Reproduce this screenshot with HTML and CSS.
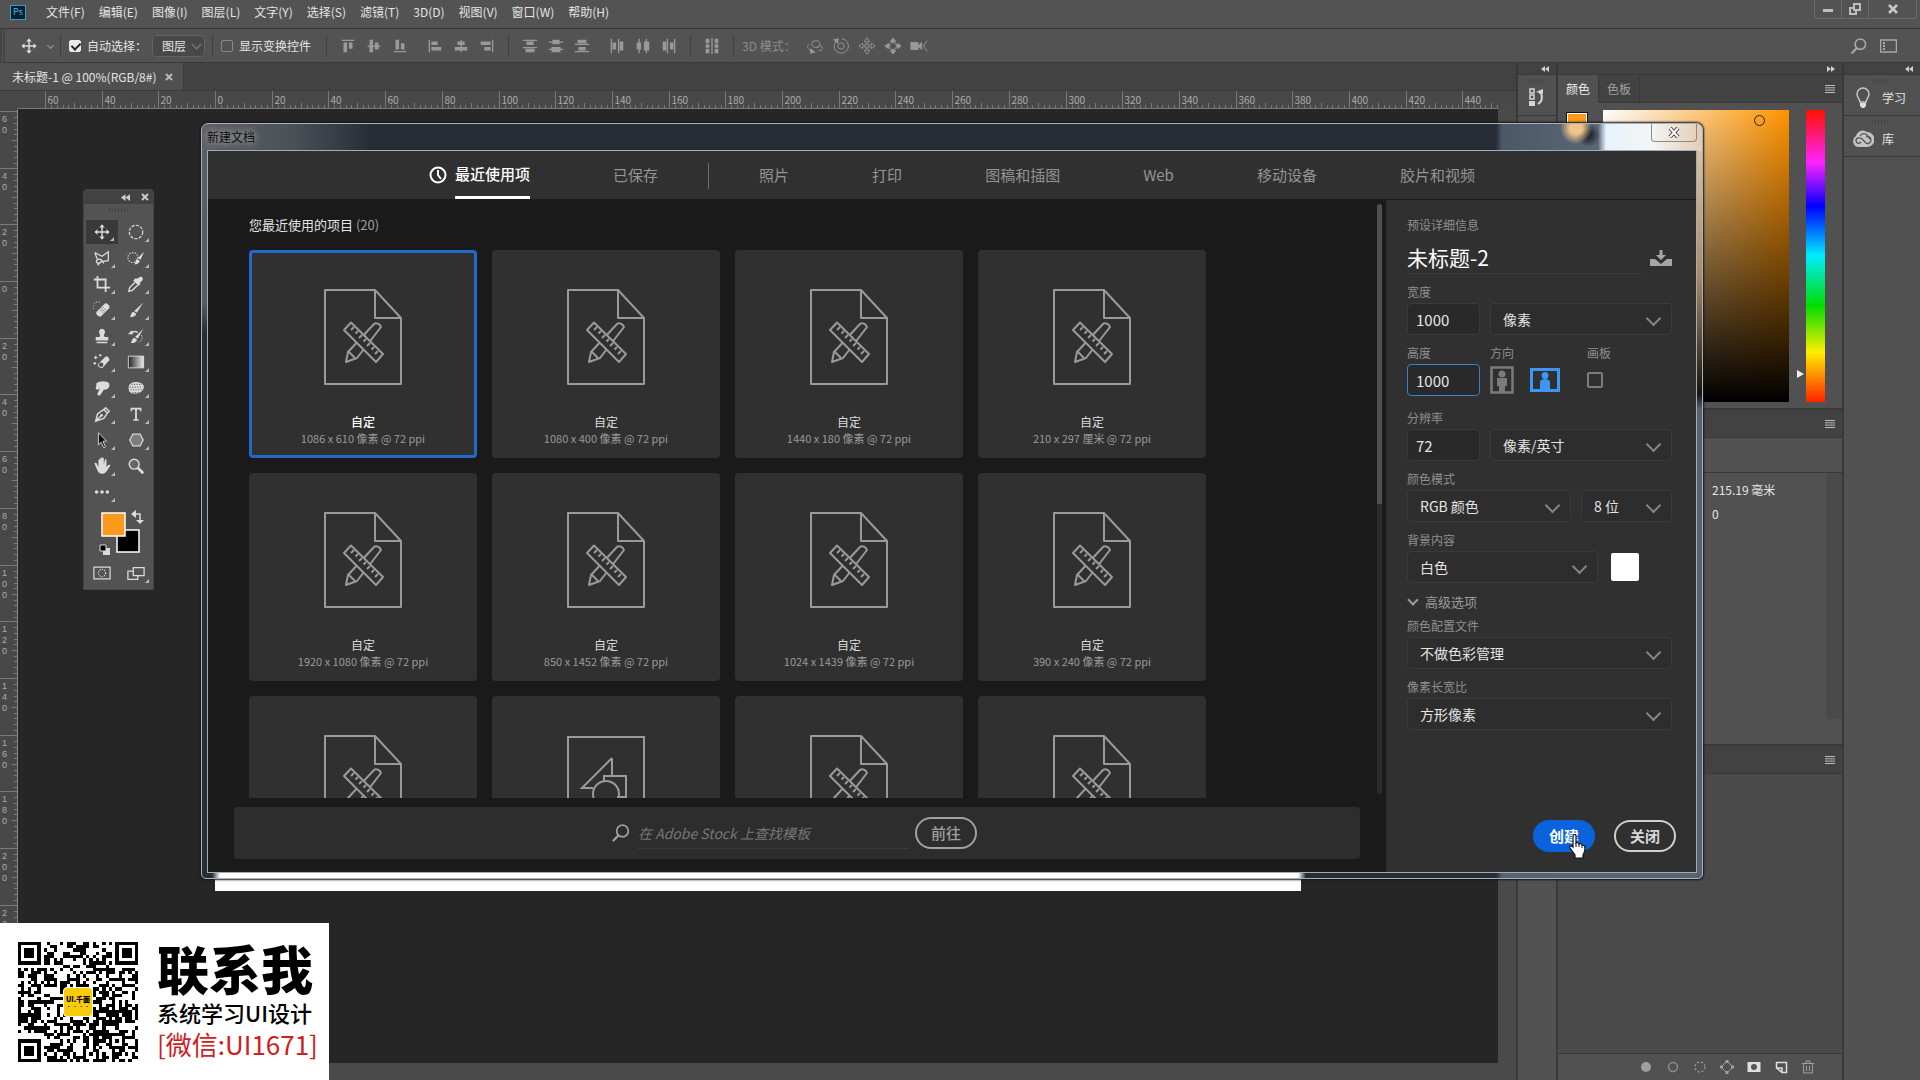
FILE: index.html
```html
<!DOCTYPE html>
<html lang="zh-CN">
<head>
  <meta charset="UTF-8">
  <meta name="viewport" content="width=device-width, initial-scale=1.0">
  <title>新建文档</title>
  <link rel="stylesheet" href="styles.css">
</head>
<body>
  <svg class="defs" aria-hidden="true">
    <symbol id="i-move" viewBox="0 0 20 20"><path d="M10 3v14M3 10h14" stroke="currentColor" stroke-width="1.6"/><path d="M10 1.5l3 3.5H7zM10 18.5l3-3.5H7zM1.500 10L5 7v6zM18.500 10L15 7v6z" fill="currentColor"/></symbol>
    <symbol id="i-search" viewBox="0 0 20 20"><circle cx="11.500" cy="8" r="5.800" fill="none" stroke="currentColor" stroke-width="1.800"/><path d="M7.300 12.500L2.500 17.500" stroke="currentColor" stroke-width="2.400" stroke-linecap="round"/></symbol>
    <symbol id="i-top" viewBox="0 0 20 20"><path d="M3 3h14v1.500H3zM5 6h4v11H5zM11 6h4v7h-4z"/></symbol>
    <symbol id="i-mid" viewBox="0 0 20 20"><path d="M3 9.500h14V11H3zM5 3h4v14H5zM11 6h4v8h-4z"/></symbol>
    <symbol id="i-dist" viewBox="0 0 20 20"><path d="M2 3h16v1.500H2zM6 5h8v4H6zM2 11h16v1.500H2zM5 13h10v4H5z"/></symbol>
    <symbol id="i-distm" viewBox="0 0 20 20"><path d="M2 5h16v1.500H2zM6 3h8v5H6zM2 13h16v1.500H2zM5 11h10v6H5z"/></symbol>
    <symbol id="i-menu" viewBox="0 0 10 8"><path d="M0 .5h10M0 2.800h10M0 5.100h10M0 7.500h10" stroke="currentColor"/></symbol>
    <symbol id="i-rew" viewBox="0 0 8 6"><path d="M4 0v6L0 3zM8 0v6L4 3z"/></symbol>
    <symbol id="i-doc" viewBox="0 0 78 96">
      <g fill="none" stroke="currentColor" stroke-width="2" stroke-linejoin="round">
        <path d="M1 1h50l26 28v66H1zM51 1v28h26"/>
        <path d="M50 35c2-2 6 0 7 3L33 69l-11 4 2-10z"/>
        <path d="M24 62l7 7"/>
        <path class="ruler-shape" d="M27 33.500L59 65l-7 8L20 41z"/>
        <path d="M30 38l-3 3M34 42l-2.500 2.500M38 46l-3 3M42 50l-2.500 2.500M46 54l-3 3M50 58l-2.500 2.500M54 62l-3 3"/>
      </g>
    </symbol>
    <symbol id="i-art" viewBox="0 0 78 96">
      <g fill="none" stroke="currentColor" stroke-width="2"><path d="M1 2h76v93H1zM45 23L15 53h11M45 23v18M37 46v-5h22v21h-9"/><circle cx="39" cy="59" r="13"/></g>
    </symbol>
  </svg>

  <div class="app">
    <header class="menubar">
      <span class="logo">Ps</span>
      <nav>
        <a href="#">文件(F)</a><a href="#">编辑(E)</a><a href="#">图像(I)</a><a href="#">图层(L)</a><a href="#">文字(Y)</a><a href="#">选择(S)</a><a href="#">滤镜(T)</a><a href="#">3D(D)</a><a href="#">视图(V)</a><a href="#">窗口(W)</a><a href="#">帮助(H)</a>
      </nav>
      <div class="winctl">
        <button aria-label="最小化"><svg width="12" height="12"><path d="M1 6h10v3H1z" fill="#bdbdbd"/></svg></button>
        <button aria-label="还原"><svg width="12" height="12" fill="none" stroke="#bdbdbd" stroke-width="2"><path d="M5 1h6v6H5zM4 5H1v6h6V8"/></svg></button>
        <button class="wide" aria-label="关闭窗口"><svg width="12" height="12"><path d="M2 2l8 8M10 2l-8 8" stroke="#c8c8c8" stroke-width="2.500"/></svg></button>
      </div>
    </header>

    <div class="options">
      <svg class="opt-move" width="18" height="18"><use href="#i-move"/></svg>
      <i class="chev small"></i>
      <i class="sep"></i>
      <label><input type="checkbox" class="tick" checked>自动选择：</label>
      <span class="pick mini"><select aria-label="自动选择对象"><option>图层</option></select></span>
      <i class="sep"></i>
      <label class="transform"><input type="checkbox" class="tick">显示变换控件</label>
      <i class="sep"></i>
      <div class="icons">
        <svg><use href="#i-top"/></svg><svg><use href="#i-mid"/></svg><svg class="flip"><use href="#i-top"/></svg>
      </div>
      <div class="icons">
        <svg class="left"><use href="#i-top"/></svg><svg class="left"><use href="#i-mid"/></svg><svg class="right"><use href="#i-top"/></svg>
      </div>
      <i class="sep"></i>
      <div class="icons">
        <svg><use href="#i-dist"/></svg><svg><use href="#i-distm"/></svg><svg class="flip"><use href="#i-dist"/></svg>
      </div>
      <div class="icons">
        <svg class="left"><use href="#i-dist"/></svg><svg class="left"><use href="#i-distm"/></svg><svg class="right"><use href="#i-dist"/></svg>
      </div>
      <i class="sep"></i>
      <div class="icons"><svg viewBox="0 0 20 20"><path d="M3 2h4v5H3zM3 8h4v4H3zM3 13h4v5H3zM9.300 1h1.400v18H9.300zM13 2h4v5h-4zM13 8h4v4h-4zM13 13h4v5h-4z"/></svg></div>
      <i class="sep"></i>
      <span class="mode">3D 模式：</span>
      <div class="icons line">
        <svg viewBox="0 0 20 20"><path d="M8 6a4 4 0 1 1 4 6M9 4a4 4 0 0 0-2 6c2 2 6 2 8 0M3 8c-3 3 0 7 5 8M14 15c5 1 5-4 2-6"/><path d="M5 13l5 4-5 1z" fill="#999"/></svg>
        <svg viewBox="0 0 20 20"><circle cx="10" cy="10" r="3.500"/><path d="M5 4a8 8 0 1 0 6-2"/><path d="M2 3l5-1-1 5z" fill="#999"/></svg>
        <svg viewBox="0 0 20 20"><path d="M10 1l3 4h-2v4h4V7l4 3-4 3v-2h-4v4h2l-3 4-3-4h2v-4H5v2l-4-3 4-3v2h4V5H7z"/></svg>
        <svg viewBox="0 0 20 20"><circle cx="10" cy="10" r="4"/><path d="M10 1l3 4H7zM10 19l3-4H7zM1 10l4-3v6zM19 10l-4-3v6z" fill="#999"/></svg>
        <svg viewBox="0 0 20 20"><path d="M1 6h8v8H1zM9 10l4-4v8z" fill="#999"/><path d="M19 4l-4 6 4 6"/></svg>
      </div>
      <div class="opt-right">
        <svg width="18" height="18"><use href="#i-search"/></svg>
        <svg width="17" height="14" fill="none" stroke="#a8a8a8"><path d="M.5 1h16v12H.5z" stroke-width="1.500"/><path d="M3 4h2M3 7h2M3 10h2" stroke-width="2"/></svg>
      </div>
    </div>

    <div class="work">
      <main class="doc">
        <div class="doctabs"><div class="doctab">未标题-1 @ 100%(RGB/8#) <button aria-label="关闭文档"><svg width="8" height="8"><path d="M1 1l6 6M7 1L1 7" stroke="#b8b8b8" stroke-width="2"/></svg></button></div></div>
        <svg class="hruler" id="hruler"></svg>
        <div class="stage">
          <svg class="vruler" id="vruler"></svg>
          <div class="canvas"><div class="sheet"></div></div>
          <div class="vscroll"></div>
        </div>
        <div class="status"></div>
      </main>

      <aside class="strip">
        <div class="dockhead"><svg width="8" height="6"><use href="#i-rew"/></svg></div>
        <button class="dockbtn" aria-label="历史记录"><i class="grip"></i>
          <svg width="18" height="20" fill="none" stroke="#d6d6d6" stroke-width="1.500"><path d="M2 2h4v4H2zM2 8h4v4H2z"/><path d="M1 14h6v5H1z" fill="#d6d6d6" stroke="none"/><path d="M10 17c5-3 5-9 1-13" stroke-width="2"/><path d="M8 5l7-3v5z" fill="#d6d6d6" stroke="none"/></svg>
        </button>
      </aside>

      <aside class="panels">
        <div class="dockhead"><svg width="8" height="6" class="fwd"><use href="#i-rew"/></svg></div>
        <div class="ptabs"><button class="on">颜色</button><button>色板</button><svg class="burger"><use href="#i-menu"/></svg></div>
        <div class="color">
          <i class="fgchip"></i>
          <div class="field"><i class="ring"></i></div>
          <div class="hue"><i class="knob"></i></div>
        </div>
        <div class="ptabs"><svg class="burger"><use href="#i-menu"/></svg></div>
        <div class="props">
          <div class="props-head"></div>
          <div class="props-body"><p>215.19 毫米</p><p>0</p></div>
        </div>
        <div class="ptabs"><svg class="burger"><use href="#i-menu"/></svg></div>
        <div class="layers"></div>
        <div class="layerbar">
          <svg viewBox="0 0 14 14"><circle cx="7" cy="7" r="5" fill="#a0a0a0"/></svg>
          <svg viewBox="0 0 14 14"><circle cx="7" cy="7" r="4.500" fill="none" stroke="#8c8c8c" stroke-width="1.500"/></svg>
          <svg viewBox="0 0 14 14"><circle cx="7" cy="7" r="5" fill="none" stroke="#a0a0a0" stroke-width="1.200" stroke-dasharray="2 2"/></svg>
          <svg viewBox="0 0 14 14"><path d="M7 1l6 6-6 6-6-6z" fill="none" stroke="#a0a0a0"/><path d="M5.500 0h3v3h-3zM5.500 11h3v3h-3zM0 5.500h3v3H0zM11 5.500h3v3h-3z" fill="#a0a0a0"/></svg>
          <svg viewBox="0 0 14 14"><path d="M.5 2h13v10H.5z" fill="#dedede"/><circle cx="7" cy="7" r="3" fill="#555"/></svg>
          <svg viewBox="0 0 14 14"><path d="M2.500 2.500h10v10H8L2.500 8zM3 8h5v5" fill="none" stroke="#dedede" stroke-width="1.500"/></svg>
          <svg viewBox="0 0 14 14"><path d="M2.500 3.500h9V13h-9zM1 3.500h12M5 3V1h4v2M5.500 6v5M8.500 6v5" fill="none" stroke="#a0a0a0"/></svg>
        </div>
      </aside>

      <aside class="dock">
        <div class="dockhead"><svg width="8" height="6"><use href="#i-rew"/></svg></div>
        <button class="dockbtn"><i class="grip"></i>
          <svg width="22" height="22" fill="none" stroke="#c8c8c8" stroke-width="1.500"><path d="M8 15c0-3-3-4-3-8a6 6 0 0 1 12 0c0 4-3 5-3 8z"/><path d="M8 16h6v3l-2 2h-2l-2-2z" fill="#e0e0e0" stroke="none"/></svg>学习</button>
        <button class="dockbtn"><i class="grip"></i>
          <svg width="22" height="22"><path d="M6 19a6 6 0 0 1-2-11 7 7 0 0 1 11-4 7.500 7.500 0 0 1 0 15z" fill="#c4c4c4"/><path d="M9 14c-1.500 2-5 1.500-5-1.500S8 9 10 11l4 4c2 1.500 5 0 5-3s-3-4.500-5-3M8 8c2-3 5-3 7-1l3 4" fill="none" stroke="#535353" stroke-width="1.300"/></svg>库</button>
      </aside>
    </div>
  </div>

  <section class="toolbox">
    <div class="toolbox-head"><svg width="9" height="7"><use href="#i-rew"/></svg><button aria-label="关闭工具"><svg width="8" height="8"><path d="M1 1l6 6M7 1L1 7" stroke="#c8c8c8" stroke-width="2"/></svg></button></div>
    <i class="grip"></i>
    <div class="tools">
      <button class="on" aria-label="移动"><svg><use href="#i-move"/></svg></button>
      <button aria-label="椭圆选框"><svg viewBox="0 0 20 20"><circle cx="10" cy="10" r="7.500" fill="none" stroke="#dcdcdc" stroke-width="1.300" stroke-dasharray="3.500 1.500"/></svg></button>
      <button aria-label="套索"><svg viewBox="0 0 20 20"><path d="M2 4l8 4 7-5v10l-8 1M2 4l3 8M5 12c4-2 6 1 3 3s-6-1-3-3zM8 15l-3 3M9 12l3 4" fill="none" stroke="#dcdcdc" stroke-width="1.400"/></svg></button>
      <button aria-label="快速选择"><svg viewBox="0 0 20 20"><circle cx="6.500" cy="9.500" r="5.500" fill="none" stroke="#dcdcdc" stroke-width="1.200" stroke-dasharray="1.500 1.500"/><path d="M19 3l-4 9-3-2zM11 11l3 2c0 3-3 4-6 4 2-2 1-5 3-6z"/></svg></button>
      <button aria-label="裁剪"><svg viewBox="0 0 20 20"><path d="M5 1v13h14M1 5h13v14" fill="none" stroke="#dcdcdc" stroke-width="2"/></svg></button>
      <button aria-label="吸管"><svg viewBox="0 0 20 20"><path d="M12 4c3-4 7-2 5 2l-3 3 1 1-2 2-6-6 2-2z"/><path d="M9 8l-6 6-1 4 4-1 6-6" fill="none" stroke="#dcdcdc" stroke-width="1.500"/></svg></button>
      <button aria-label="修复画笔"><svg viewBox="0 0 20 20"><path d="M4 12l9-9c2-2 7 3 5 5l-9 9c-2 2-7-3-5-5z"/><path d="M9 8l4 4M8 10l3 3M11 7l3 3" stroke="#535353" stroke-dasharray="1.500 1"/><path d="M1 9a5 5 0 0 1 7-7" fill="none" stroke="#dcdcdc" stroke-dasharray="1.500 1.500"/></svg></button>
      <button aria-label="画笔"><svg viewBox="0 0 20 20"><path d="M18 2L11 13l-3-2zM7 12l3 2c0 3-3 4-7 4 2-2 1-5 4-6z"/></svg></button>
      <button aria-label="图章"><svg viewBox="0 0 20 20"><path d="M10 2a3.500 3.500 0 0 1 3 5c-1 2-1 3 0 4h4v4H3v-4h4c1-1 1-2 0-4a3.500 3.500 0 0 1 3-5zM4 16.500h12V18H4z"/></svg></button>
      <button aria-label="历史画笔"><svg viewBox="0 0 20 20"><path d="M18 2l-6 11-3-2zM8 12l3 2c0 3-3 4-7 4 2-2 1-5 4-6zM1 8l4-4 2 4z"/><path d="M5 6c3-2 5-1 7 0" fill="none" stroke="#dcdcdc" stroke-width="1.500"/><path d="M16 9c2 4 0 7-3 8" fill="none" stroke="#dcdcdc" stroke-dasharray="1.500 1.500"/></svg></button>
      <button aria-label="橡皮擦"><svg viewBox="0 0 20 20"><path d="M6 12l8-8c2-1 5 2 4 4l-7 8c-2 2-7-1-5-4z"/><circle cx="9" cy="13" r="2.500" fill="#535353"/><path d="M3 3v4M1 5h4M8 1v3M6.500 2.500h3M2 10v3M.5 11.500h3" stroke="#dcdcdc" stroke-width="1.200"/></svg></button>
      <button aria-label="渐变"><svg viewBox="0 0 20 20"><defs><linearGradient id="grad"><stop stop-color="#222"/><stop offset="1" stop-color="#eee"/></linearGradient></defs><path d="M1.500 3.500h17v13h-17z" fill="url(#grad)" stroke="#dcdcdc"/></svg></button>
      <button aria-label="涂抹"><svg viewBox="0 0 20 20"><path d="M3 6c2-4 12-5 15-1 1 4-1 7-6 7l-4 6c-1 1-4 0-3-2l3-6c-2 3-5 2-5 0l1-4z"/></svg></button>
      <button aria-label="海绵"><svg viewBox="0 0 20 20"><path d="M2 8c1-6 13-6 16-2 2 4-1 10-8 10C3 17 1 13 2 8z"/><path d="M3 9h14M4 12h13M5 6h12M6 15h9" stroke="#626262" stroke-width="1.200" stroke-dasharray="1.200 1.600"/></svg></button>
      <button aria-label="钢笔"><svg viewBox="0 0 20 20"><path d="M3 18l2-8 7-5 4 4-4 6-9 3zM3 18l6-6M12 5l2-2 4 4-2 2" fill="none" stroke="#dcdcdc" stroke-width="1.600"/><circle cx="9.500" cy="11.500" r="1.500"/></svg></button>
      <button aria-label="文字"><svg viewBox="0 0 20 20"><path d="M4 3h12v4h-1.500L14 5h-3v10.500l2 .5v1.500H7V16l2-.5V5H6l-.5 2H4z"/></svg></button>
      <button aria-label="路径选择"><svg viewBox="0 0 20 20"><path d="M6 2l9 9-4 .5 3 6-2 1-3-6-3 3z" fill="#111" stroke="#dcdcdc"/></svg></button>
      <button aria-label="多边形"><svg viewBox="0 0 20 20"><path d="M6.500 3.500h8L18 10l-3.500 6.500h-8L3 10z" fill="#7c7c7c" stroke="#dcdcdc" stroke-width="1.300"/></svg></button>
      <button aria-label="抓手"><svg viewBox="0 0 20 20"><path d="M6 11V4c0-2 2-2 2 0v5V2c0-2 2-2 2 0v7V2c0-2 2-2 2 0v7l1-5c0-2 2-2 2 0v7l2-2c1-1 3 0 2 1l-4 6c-3 4-9 3-10-1L2 8c-1-2 1-2 2-1z"/></svg></button>
      <button class="plain" aria-label="缩放"><svg viewBox="0 0 20 20"><circle cx="8" cy="8" r="5.500" fill="#666" stroke="#dcdcdc" stroke-width="1.600"/><path d="M12 12l6 6" stroke="#dcdcdc" stroke-width="3"/></svg></button>
      <button aria-label="更多工具"><svg viewBox="0 0 20 20"><circle cx="4" cy="10" r="2"/><circle cx="10" cy="10" r="2"/><circle cx="16" cy="10" r="2"/></svg></button>
    </div>
    <svg class="swatches" width="69" height="55">
      <path d="M33 25h22v22H33z" fill="#000" stroke="#fff" stroke-width="1.500"/>
      <path d="M18 8h23v23H18z" fill="#fb991c" stroke="#fff" stroke-width="1.500"/>
      <path d="M50 9h6v7" fill="none" stroke="#dcdcdc" stroke-width="1.500"/><path d="M47 9l5-4v8zM56 19l-4-4h8z" fill="#dcdcdc"/>
      <path d="M19 43h7v7h-7z" fill="#dcdcdc"/><path d="M16 40h6v6h-6z" fill="#000" stroke="#dcdcdc"/>
    </svg>
    <div class="tools">
      <button class="plain" aria-label="快速蒙版"><svg viewBox="0 0 20 20" fill="none" stroke="#dcdcdc" stroke-width="1.300"><path d="M1 3.500h18v13H1z"/><circle cx="10" cy="10" r="4" stroke-dasharray="1.300 1.300"/></svg></button>
      <button aria-label="屏幕模式"><svg viewBox="0 0 20 20" fill="none" stroke="#dcdcdc" stroke-width="1.400"><path d="M7 4h12v9H7zM7 8H1v9h11v-4"/></svg></button>
    </div>
  </section>

  <section class="dialog" role="dialog" aria-labelledby="dlg-title">
    <div class="titlebar"><span id="dlg-title">新建文档</span><button class="xbtn" aria-label="关闭对话框"><svg width="12" height="11"><path d="M2 1l8 9M10 1L2 10" stroke="#444" stroke-width="4"/><path d="M2 1l8 9M10 1L2 10" stroke="#fff" stroke-width="2"/></svg></button></div>
    <div class="inner">
      <nav class="tabs">
        <button class="tab on"><svg width="18" height="18" fill="none" stroke="#fff" stroke-width="2"><circle cx="9" cy="9" r="7.500"/><path d="M9 4v5l3 4"/></svg><span>最近使用项</span></button>
        <button class="tab">已保存</button>
        <i class="rule"></i>
        <button class="tab">照片</button>
        <button class="tab">打印</button>
        <button class="tab">图稿和插图</button>
        <button class="tab">Web</button>
        <button class="tab">移动设备</button>
        <button class="tab">胶片和视频</button>
      </nav>
      <div class="content">
        <div class="browse">
          <div class="scroller">
            <h2>您最近使用的项目 <span>(20)</span></h2>
            <div class="grid">
              <button class="preset on"><svg><use href="#i-doc"/></svg><b>自定</b><small>1086 x 610 像素 @ 72 ppi</small></button>
              <button class="preset"><svg><use href="#i-doc"/></svg><b>自定</b><small>1080 x 400 像素 @ 72 ppi</small></button>
              <button class="preset"><svg><use href="#i-doc"/></svg><b>自定</b><small>1440 x 180 像素 @ 72 ppi</small></button>
              <button class="preset"><svg><use href="#i-doc"/></svg><b>自定</b><small>210 x 297 厘米 @ 72 ppi</small></button>
              <button class="preset"><svg><use href="#i-doc"/></svg><b>自定</b><small>1920 x 1080 像素 @ 72 ppi</small></button>
              <button class="preset"><svg><use href="#i-doc"/></svg><b>自定</b><small>850 x 1452 像素 @ 72 ppi</small></button>
              <button class="preset"><svg><use href="#i-doc"/></svg><b>自定</b><small>1024 x 1439 像素 @ 72 ppi</small></button>
              <button class="preset"><svg><use href="#i-doc"/></svg><b>自定</b><small>390 x 240 像素 @ 72 ppi</small></button>
              <button class="preset" aria-label="自定"><svg><use href="#i-doc"/></svg></button>
              <button class="preset" aria-label="自定"><svg><use href="#i-art"/></svg></button>
              <button class="preset" aria-label="自定"><svg><use href="#i-doc"/></svg></button>
              <button class="preset" aria-label="自定"><svg><use href="#i-doc"/></svg></button>
            </div>
            <i class="thumb"></i>
          </div>
          <form class="stock">
            <svg width="20" height="20"><use href="#i-search"/></svg>
            <input type="search" placeholder="在 Adobe Stock 上查找模板" aria-label="在 Adobe Stock 上查找模板">
            <button type="button" class="pill">前往</button>
          </form>
        </div>

        <form class="details">
          <p class="cap">预设详细信息</p>
          <div class="namerow">
            <input class="name" value="未标题-2" aria-label="文档名称">
            <button type="button" aria-label="保存预设"><svg width="22" height="16" fill="#a6a6a6"><path d="M9.500 0h3v5h3.500l-5 5-5-5h3.500z"/><path d="M0 9h5l6 5 6-5h5v7H0z"/></svg></button>
          </div>
          <div class="row">
            <div class="cell num"><label for="w">宽度</label><input id="w" value="1000"></div>
            <div class="cell grow"><span class="pick"><select aria-label="宽度单位"><option>像素</option></select></span></div>
          </div>
          <div class="row tall">
            <div class="cell num"><label for="h">高度</label><input id="h" class="focus" value="1000"></div>
            <div class="cell orient"><span class="lab">方向</span>
              <div class="btns">
                <button type="button" aria-label="纵向"><svg width="24" height="28"><path d="M1.500 1.500h21v25h-21z" fill="none" stroke="#7b7b7b" stroke-width="2.500"/><circle cx="12" cy="8" r="3.500" fill="#7b7b7b"/><path d="M7 12h10v8h-2v6H9v-6H7z" fill="#7b7b7b"/></svg></button>
                <button type="button" aria-label="横向"><svg width="30" height="24"><path d="M1.500 1.500h27v21h-27z" fill="none" stroke="#3d95f5" stroke-width="3"/><circle cx="15" cy="7.500" r="3.500" fill="#3d95f5"/><path d="M10 22v-8c0-4 10-4 10 0v8z" fill="#3d95f5"/></svg></button>
              </div>
            </div>
            <div class="cell"><label for="ab">画板</label><div class="btns"><input type="checkbox" id="ab" class="box"></div></div>
          </div>
          <div class="row">
            <div class="cell num"><label for="r">分辨率</label><input id="r" value="72"></div>
            <div class="cell grow"><span class="pick"><select aria-label="分辨率单位"><option>像素/英寸</option></select></span></div>
          </div>
          <div class="row">
            <div class="cell grow"><label for="m">颜色模式</label><span class="pick"><select id="m"><option>RGB 颜色</option></select></span></div>
            <div class="cell bits"><span class="pick"><select aria-label="位深度"><option>8 位</option></select></span></div>
          </div>
          <div class="row">
            <div class="cell bg"><label for="b">背景内容</label><span class="pick"><select id="b"><option>白色</option></select></span></div>
            <button type="button" class="chip" aria-label="背景颜色"></button>
          </div>
          <button type="button" class="adv"><i class="chev"></i>高级选项</button>
          <div class="row">
            <div class="cell grow"><label for="p">颜色配置文件</label><span class="pick"><select id="p"><option>不做色彩管理</option></select></span></div>
          </div>
          <div class="row">
            <div class="cell grow"><label for="a">像素长宽比</label><span class="pick"><select id="a"><option>方形像素</option></select></span></div>
          </div>
          <div class="actions">
            <button type="button" class="pill primary">创建</button>
            <button type="button" class="pill light">关闭</button>
            <svg class="cursor" width="18" height="25"><path d="M5 2c0-2 3-2 3 0v7c2-1 3 0 3 1 2-1 3 0 3 1 2 0 3 1 3 3 0 4-1 5-2 7v3H7v-3l-5-7c-1-2 1-3 3-1z" fill="#fff" stroke="#111" stroke-width="1.200"/><path d="M8 9v4M11 10v3M14 11v3" stroke="#111"/></svg>
          </div>
        </form>
      </div>
    </div>
  </section>

  <section class="promo">
    <div class="code">
      <svg id="qr" viewBox="0 0 37 37" shape-rendering="crispEdges"></svg>
      <div class="badge"><b>UI.千面</b><span>• • • •</span></div>
    </div>
    <div class="words"><strong>联系我</strong><span>系统学习UI设计</span><em>[微信:UI1671]</em></div>
  </section>

  <script src="script.js"></script>
</body>
</html>
```

FILE: styles.css
```css
* { box-sizing: border-box; }
body {
  margin: 0;
  height: 100vh;
  overflow: hidden;
  position: relative;
  background: #535353;
  color: #e4e4e4;
  font: 12px/18px "Noto Sans CJK SC", sans-serif;
}
button, input, select { font: inherit; color: inherit; margin: 0; }
button { background: none; border: 0; padding: 0; }
p, h2 { margin: 0; font-weight: normal; }
a { color: inherit; text-decoration: none; }
i { display: block; }
svg { display: block; flex: none; }
.defs { position: absolute; width: 0; height: 0; }

.app { display: flex; flex-direction: column; height: 100%; }

/* menu bar */
.menubar {
  display: flex;
  height: 29px;
  padding-left: 10px;
  border-bottom: 1px solid #393939;
}
.logo {
  width: 16px;
  height: 15px;
  margin: 5px 20px 0 0;
  background: #04202f;
  border: 1px solid #2f9fd0;
  color: #4fb8e8;
  font-size: 9px;
  line-height: 12px;
  text-align: center;
}
.menubar nav { display: flex; gap: 14px; padding-top: 3px; flex: 1; }
.winctl {
  display: flex;
  height: 19px;
  margin-right: 3px;
  border: 1px solid #696969;
  border-top: 0;
  border-radius: 0 0 3px 3px;
}
.winctl button { display: flex; justify-content: center; padding-top: 3px; width: 27px; border-right: 1px solid #696969; }
.winctl .wide { width: 47px; border: 0; }

/* options bar */
.options {
  display: flex;
  align-items: center;
  height: 34px;
  padding-left: 15px;
  border-left: 5px double #454545;
  border-bottom: 1px solid #393939;
}
.options label { display: flex; align-items: center; gap: 6px; }
.options .transform { margin-right: 8px; }
.opt-move { color: #dcdcdc; }
.sep { width: 1px; height: 22px; background: #414141; margin: 0 8px 0 7px; }
.chev {
  width: 8px;
  height: 8px;
  border: solid #9b9b9b;
  border-width: 0 2px 2px 0;
  transform: rotate(45deg);
}
.chev.small { width: 5px; height: 5px; border-width: 0 1px 1px 0; margin: 0 0 0 10px; }
.tick {
  appearance: none;
  width: 12px;
  height: 12px;
  border: 1px solid #898989;
  border-radius: 2px;
}
.tick:checked { background: #e8e8e8; border-color: #e8e8e8; }
.tick:checked::after {
  content: "";
  display: block;
  width: 4px;
  height: 7px;
  margin: 0 0 0 3px;
  border: solid #222;
  border-width: 0 2px 2px 0;
  transform: rotate(45deg);
}
.icons { display: flex; gap: 8px; margin: 0 5px 0 4px; fill: #999; }
.icons + .icons { margin-left: 12px; }
.icons svg { width: 18px; height: 18px; }
.icons.line { margin-left: 10px; fill: none; stroke: #999; }
.flip { transform: scaleY(-1); }
.left { transform: rotate(-90deg); }
.right { transform: rotate(90deg); }
.mode { color: #8d8d8d; }
.opt-right { display: flex; align-items: center; gap: 12px; margin: 0 23px 0 auto; color: #a8a8a8; }

/* work area */
.work { display: flex; flex: 1; min-height: 0; }
.doc { display: flex; flex-direction: column; flex: 1; min-width: 0; background: #4a4a4a; }
.doctabs { height: 28px; background: #424242; border-bottom: 1px solid #393939; }
.doctab {
  display: inline-flex;
  align-items: center;
  gap: 8px;
  height: 27px;
  padding: 0 10px 0 12px;
  background: #505050;
  border-right: 1px solid #393939;
  white-space: nowrap;
}
.hruler, .vruler { background: #484848; }
.hruler { width: 100%; height: 18px; }
.hruler text { font-size: 10px; fill: #adadad; }
.vruler text { font: 9px "Liberation Sans", sans-serif; fill: #adadad; }
.stage { display: flex; flex: 1; min-height: 0; }
.vruler { width: 18px; height: 100%; border-right: 1px solid #8a8a8a; }
.canvas { flex: 1; background: #262626; padding: 172px 197px 0; }
.sheet { height: 610px; background: #fff; }
.vscroll { width: 18px; background: #4a4a4a; }
.status { height: 17px; background: #4a4a4a; }

.strip, .panels, .dock { border-left: 2px solid #393939; background: #515151; }
.strip { width: 40px; }
.panels { width: 286px; display: flex; flex-direction: column; }
.dock { width: 78px; }
.dockhead {
  display: flex;
  align-items: center;
  justify-content: flex-end;
  height: 12px;
  padding-right: 7px;
  background: #424242;
  border-bottom: 1px solid #393939;
  fill: #cfcfcf;
}
.fwd { transform: scaleX(-1); }
.grip { height: 4px; background: repeating-linear-gradient(90deg, #434343 0 1px, transparent 1px 3px); }
.dockbtn {
  display: grid;
  grid-template-columns: auto auto;
  justify-content: start;
  align-content: start;
  align-items: center;
  gap: 4px 8px;
  width: 100%;
  height: 41px;
  padding: 4px 8px 0;
  border-bottom: 1px solid #393939;
}
.dockbtn .grip { grid-column: 1 / -1; width: 18px; margin-left: 20px; }
.strip .dockbtn { padding-left: 10px; }
.strip .grip { margin-left: 0; }
.ptabs {
  display: flex;
  align-items: stretch;
  height: 28px;
  background: #424242;
  border-bottom: 1px solid #393939;
}
.ptabs button { width: 41px; color: #a0a0a0; border-right: 1px solid #393939; }
.ptabs button.on { background: #515151; color: #f0f0f0; height: 28px; }
.burger { width: 10px; height: 8px; margin: 10px 7px 0 auto; color: #bdbdbd; }

.color { display: flex; height: 307px; padding: 7px 17px 6px 9px; border-bottom: 2px solid #393939; }
.fgchip { width: 20px; height: 20px; margin: 3px 16px 0 0; background: #fb991c; border: 1px solid #fff; outline: 1px solid #111; }
.field { flex: 1; position: relative; background: linear-gradient(transparent, #000), linear-gradient(90deg, #fff, #ff9300); }
.ring { position: absolute; top: 5px; right: 24px; width: 11px; height: 11px; border: 1px solid #222; border-radius: 50%; }
.hue {
  position: relative;
  width: 19px;
  margin-left: 17px;
  background: linear-gradient(#f10, #f2f 18%, #00f 33%, #0ef 50%, #0d0 67%, #fe0 83%, #f20);
}
.knob { position: absolute; left: -9px; bottom: 24px; border: 4px solid transparent; border-left: 7px solid #f0f0f0; border-right: 0; }
.props { display: flex; flex-direction: column; height: 308px; border-bottom: 2px solid #393939; }
.props-head { height: 35px; border-bottom: 1px solid #393939; }
.props-body { flex: 1; margin-bottom: 25px; padding: 8px 0 0 154px; border-right: 16px solid #4a4a4a; }
.props-body p { margin-bottom: 6px; }
.layers { flex: 1; background: #4a4a4a; }
.layerbar { display: flex; gap: 13px; justify-content: flex-end; align-items: center; height: 27px; padding-right: 27px; border-top: 1px solid #393939; }
.layerbar svg { width: 14px; height: 14px; }

/* floating toolbox */
.toolbox {
  position: absolute;
  left: 83px;
  top: 189px;
  width: 71px;
  background: #535353;
  border: 1px solid #454545;
  border-radius: 4px 4px 0 0;
  padding-bottom: 3px;
}
.toolbox-head {
  display: flex;
  align-items: center;
  justify-content: flex-end;
  gap: 11px;
  height: 14px;
  padding-right: 4px;
  background: #424242;
  fill: #cfcfcf;
}
.toolbox > .grip { width: 20px; margin: 4px auto 7px; }
.tools { display: flex; flex-wrap: wrap; padding-left: 1px; }
.tools button {
  position: relative;
  display: flex;
  align-items: center;
  justify-content: center;
  width: 34px;
  height: 26px;
  fill: #dcdcdc;
  color: #dcdcdc;
}
.tools svg { width: 18px; height: 18px; }
.tools button.on { background: #393939; border: 1px solid #535353; }
.tools button::after {
  content: "";
  position: absolute;
  right: 4px;
  bottom: 3px;
  border: 2px solid #bbb;
  border-top-color: transparent;
  border-left-color: transparent;
}
.tools .plain::after { display: none; }

/* new document dialog */
.dialog {
  position: absolute;
  left: 201px;
  right: 217px;
  top: 123px;
  bottom: 201px;
  display: flex;
  flex-direction: column;
  padding: 0 5px 5px;
  border: 1px solid #aab2bd;
  border-radius: 7px 7px 5px 5px;
  box-shadow: 0 0 2px 1px #151515;
  background:
    radial-gradient(circle at 1374px 4px, #f0c48a 6px, transparent 16px) top / 100% 27px no-repeat,
    radial-gradient(circle at 1386px 11px, #23282f 3px, transparent 12px) top / 100% 27px no-repeat,
    linear-gradient(90deg, #5d6064, #4c5158 90px, #272c37 170px, #272c37 1294px, #4d5867 1300px, #5b6776 1396px, #e6f3fc 1404px, #f3f5f5 1450px, #e2ccb3) top / 100% 27px no-repeat,
    linear-gradient(#5b5f66, #565a62 180px, #272c37 210px) left / 7px 100% no-repeat,
    linear-gradient(#e2ccb3, #a98b68 150px, #17140f 270px, #566371 285px) right / 7px 100% no-repeat,
    linear-gradient(90deg, #272c37 10px, #fff 18px, #fff 1096px, #272c37 1104px, #272c37 1294px, #566371 1300px) bottom / 100% 7px no-repeat;
}
.titlebar { display: flex; justify-content: space-between; height: 26px; }
.titlebar span { color: #0c0c0c; line-height: 26px; text-shadow: 0 0 6px #aaa, 0 0 10px #999; }
.xbtn {
  display: flex;
  align-items: center;
  justify-content: center;
  width: 46px;
  height: 18px;
  border: 1px solid #8d8a84;
  border-top: 0;
  border-radius: 0 0 4px 4px;
}
.inner { display: flex; flex-direction: column; flex: 1; min-height: 0; border: 1px solid #a3abb5; background: #303030; }
.tabs { display: flex; justify-content: center; gap: 83px; height: 49px; border-bottom: 1px solid #1c1c1c; }
.tab { display: flex; align-items: center; gap: 8px; height: 48px; color: #949494; font-size: 15px; white-space: nowrap; }
.tab.on { color: #fff; font-weight: 500; }
.tab.on span { line-height: 45px; border-bottom: 3px solid #fff; }
.rule { width: 1px; height: 26px; margin: 12px -33px 0; background: #6e6e6e; }
.content { display: flex; flex: 1; min-height: 0; }
.browse { display: flex; flex-direction: column; flex: 1; min-width: 0; padding: 0 26px 13px; background: #1a1a1a; }
.scroller { position: relative; flex: 1; min-height: 0; margin-right: -22px; padding: 16px 22px 0 15px; overflow: hidden; }
.scroller h2 { height: 34px; font-size: 13px; }
.scroller h2 span { color: #a0a0a0; }
.grid { display: grid; grid-template-columns: repeat(auto-fill, 228px); gap: 15px; }
.preset {
  display: flex;
  flex-direction: column;
  align-items: center;
  height: 208px;
  padding: 36px 0 0;
  background: #303030;
  border: 3px solid #303030;
  border-radius: 4px;
  color: #9a9a9a;
}
.preset.on { border-color: #2169cb; }
.preset svg { width: 78px; height: 96px; }
.preset b { margin-top: 28px; line-height: 18px; font-weight: normal; color: #dadada; }
.preset.on b { color: #fff; font-weight: 500; }
.preset small { font-size: 11px; line-height: 14px; }
.ruler-shape { fill: #303030; }
.thumb { position: absolute; right: 0; top: 4px; width: 5px; height: 590px; border-radius: 3px; background: linear-gradient(#4f4f4f 300px, #2c2c2c 300px); }
.stock { display: flex; align-items: center; justify-content: center; height: 52px; margin-top: 9px; padding-right: 6px; background: #2d2d2d; border-radius: 3px; color: #a0a0a0; }
.stock input {
  width: 270px;
  height: 32px;
  margin: 0 7px;
  padding: 0;
  background: none;
  border: 0;
  border-bottom: 1px solid #3a3a3a;
  font-size: 14px;
  font-style: italic;
}
.stock input::placeholder { color: #777; }
.pill { width: 62px; height: 32px; border: 2px solid #a0a0a0; border-radius: 16px; font-size: 15px; font-weight: 500; }
.pill.primary { background: #0a63dd; border-color: #0a63dd; color: #fff; font-weight: bold; }
.pill.light { border-color: #cfcfcf; color: #d6d6d6; font-weight: bold; }

.details { display: flex; flex-direction: column; width: 310px; padding: 16px 24px 20px 21px; }
.cap, .details label, .lab { color: #8f8f8f; }
.cap { height: 25px; }
.namerow { display: flex; gap: 8px; align-items: center; height: 33px; margin-bottom: 9px; }
.name { flex: 1; min-width: 0; height: 33px; padding: 0; background: none; border: 0; border-bottom: 1px solid #3c3c3c; font-size: 21px; color: #fff; }
.row { display: flex; align-items: flex-end; gap: 10px; margin-bottom: 9px; }
.row.tall { margin-bottom: 13px; }
.cell { display: flex; flex-direction: column; gap: 2px; }
.num { width: 73px; }
.num input { width: 100%; height: 32px; padding: 0 8px; background: #292929; border: 1px solid #3a3a3a; border-radius: 4px; font-size: 15px; }
.num .focus { border-color: #3781cf; }
.grow { flex: 1; }
.bits { width: 91px; }
.bg { width: 191px; }
.orient { width: 87px; }
.btns { display: flex; align-items: center; gap: 16px; height: 32px; }
.box { appearance: none; width: 16px; height: 16px; border: 2px solid #7b7b7b; border-radius: 2px; }
.pick { position: relative; display: block; }
.pick select {
  appearance: none;
  display: block;
  width: 100%;
  height: 32px;
  padding: 0 12px;
  background: #2d2d2d;
  border: 1px solid #3a3a3a;
  border-radius: 4px;
  font-size: 14px;
}
.pick::after {
  content: "";
  position: absolute;
  right: 13px;
  top: 10px;
  width: 9px;
  height: 9px;
  border: solid #858585;
  border-width: 0 2px 2px 0;
  transform: rotate(45deg);
}
.pick.mini { margin: 0 0 0 5px; width: 53px; }
.pick.mini select { height: 22px; padding: 0 9px; background: #484848; border-color: #626262; font-size: 12px; }
.pick.mini::after { right: 5px; top: 6px; width: 6px; height: 6px; border-width: 0 1px 1px 0; }
.chip { width: 28px; height: 28px; margin: 0 0 2px 3px; background: #fff; border-radius: 2px; }
.adv { display: flex; align-items: center; gap: 8px; height: 20px; margin-bottom: 5px; padding-left: 2px; color: #9b9b9b; font-size: 13px; }
.adv .chev { margin-top: -4px; }
.actions { position: relative; display: flex; justify-content: flex-end; gap: 19px; margin: auto -4px 0 0; }
.cursor { position: absolute; right: 90px; top: 14px; }

/* contact card */
.promo { position: absolute; left: 0; bottom: 0; display: flex; align-items: center; gap: 19px; width: 329px; height: 157px; padding-left: 18px; background: #fff; color: #000; }
.code { display: grid; place-items: center; }
.code > * { grid-area: 1 / 1; }
.code > svg { width: 120px; height: 120px; }
.badge { display: flex; flex-direction: column; justify-content: center; width: 30px; height: 30px; background: #f8cb0d; border: 1px solid #fff; border-radius: 4px; text-align: center; }
.badge b { font-size: 7px; line-height: 8px; font-weight: 900; }
.badge span { font-size: 5px; line-height: 5px; }
.words { display: flex; flex-direction: column; padding-bottom: 3px; white-space: nowrap; }
.words strong { font-size: 52px; line-height: 56px; font-weight: 900; }
.words span { font-size: 22px; line-height: 32px; font-weight: 500; }
.words em { font-size: 26px; line-height: 32px; font-style: normal; color: #cf2020; }
```

FILE: script.js
```js
const STEP = 56.7; // 20 mm at 100% zoom

function line(x1, y1, x2, y2) {
  return `<path d="M${x1} ${y1}L${x2} ${y2}" stroke="#7a7a7a"/>`;
}

function drawTopRuler() {
  let out = "";
  for (let i = -3; i <= 22; i++) {
    const x = Math.round(215 + i * STEP) + 0.5;
    if (x > 1498) break;
    out += line(x, 0, x, 18);
    out += `<text x="${x + 2}" y="13">${Math.abs(i * 20)}</text>`;
    for (let k = 1; k < 10; k++) {
      const t = Math.round(x + k * STEP / 10) + 0.5;
      if (t < 1498) out += line(t, k === 5 ? 12 : 14, t, 18);
    }
  }
  document.getElementById("hruler").innerHTML = out + line(18, 17.5, 1498, 17.5);
}

function drawSideRuler() {
  let out = "";
  for (let i = -3; i <= 13; i++) {
    const y = Math.round(172 + i * STEP) + 0.5;
    out += line(0, y, 18, y);
    String(Math.abs(i * 20)).split("").forEach((d, n) => {
      out += `<text x="2" y="${y + 10 + n * 11}">${d}</text>`;
    });
    for (let k = 1; k < 10; k++) {
      const t = Math.round(y + k * STEP / 10) + 0.5;
      out += line(k === 5 ? 12 : 14, t, 18, t);
    }
  }
  document.getElementById("vruler").innerHTML = out;
}

function drawCode() {
  const n = 37;
  let seed = 1671;
  let d = "";
  for (let y = 0; y < n; y++) {
    for (let x = 0; x < n; x++) {
      seed = (seed * 1103515245 + 12345) % 2147483648;
      let on = seed / 2147483648 > 0.48;
      // three corner finders
      for (const [cx, cy] of [[3, 3], [n - 4, 3], [3, n - 4]]) {
        const m = Math.max(Math.abs(x - cx), Math.abs(y - cy));
        if (m <= 4) on = m === 3 || m <= 1;
      }
      // small alignment mark
      const a = Math.max(Math.abs(x - 30), Math.abs(y - 30));
      if (a <= 2) on = a !== 1;
      if (on) d += `M${x} ${y}h1v1h-1z`;
    }
  }
  document.getElementById("qr").innerHTML = `<path d="${d}"/>`;
}

drawTopRuler();
drawSideRuler();
drawCode();
```
